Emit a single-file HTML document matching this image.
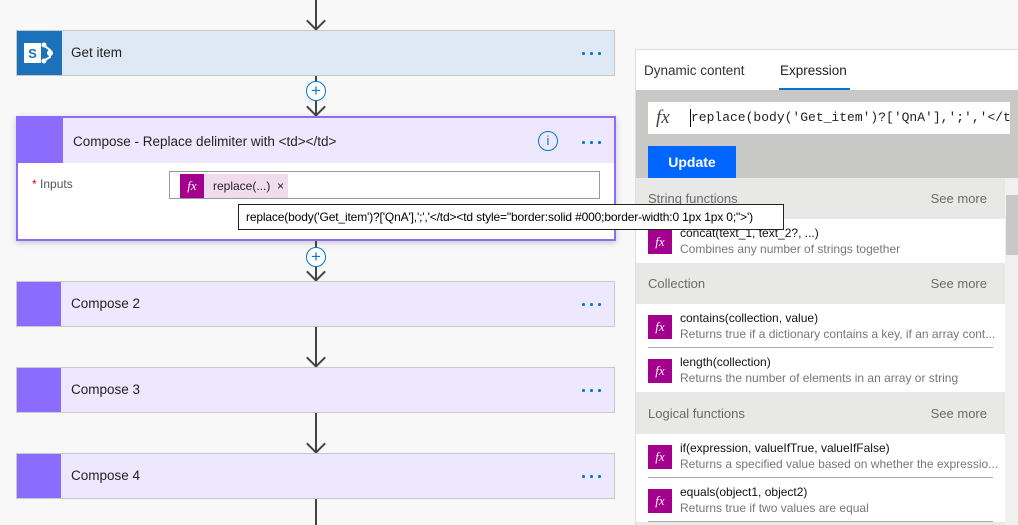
<!DOCTYPE html>
<html><head><meta charset="utf-8"><style>
*{box-sizing:border-box;margin:0;padding:0}
body{width:1018px;height:525px;overflow:hidden;background:#f8f8f8;font-family:"Liberation Sans",sans-serif;position:relative;color:#000}
.abs{position:absolute}
.card{position:absolute;left:16px;width:599px;border:1px solid #c8c8c8;background:#ede8fe}
.card .ic{position:absolute;left:0;top:0;width:44px;height:100%;background:#8c6cff}
.card .t{position:absolute;left:54px;top:0;line-height:44px;font-size:13.5px;color:#222}
.dots{position:absolute;right:13px;top:21px;width:19px;height:3px}
.dots i{position:absolute;top:0;width:2.5px;height:2.5px;border-radius:50%;background:#0078d4}
.line{position:absolute;left:315px;width:2px;background:#444}
.arr{position:absolute;left:309px;width:14px;height:14px;border-right:2px solid #444;border-bottom:2px solid #444;transform:rotate(45deg)}
.plus{position:absolute;left:306px;width:20px;height:20px;border:1px solid #0078d4;border-radius:50%;background:#fff;color:#0078d4;font-size:17px;line-height:17px;text-align:center}
.fx{position:absolute;width:24px;height:24px;background:#a4008e;color:#fff;font-family:"Liberation Serif",serif;font-style:italic;font-size:13px;text-align:center;line-height:23px}
.hd{position:absolute;left:636px;width:369px;height:41px;background:#e8e9e7;font-size:13px;color:#6a6a6a;line-height:42px;padding-left:12px}
.hd span{position:absolute;right:18px}
.it{position:absolute;left:636px;width:369px;height:44px;background:#fff}
.it .fx{left:12px;top:11px}
.it b{position:absolute;left:44px;top:7px;font-weight:normal;font-size:12px;color:#111}
.it em{position:absolute;left:44px;top:23px;font-style:normal;font-size:12px;color:#777;white-space:nowrap}
.it.sep:after{content:"";position:absolute;left:12px;right:12px;bottom:0;height:1px;background:#aaa}
</style></head><body>

<div class="line" style="top:0;height:28px"></div><div class="arr" style="top:14px"></div>

<div class="card" style="top:30px;height:46px;background:#dfe9f5">
 <div class="ic" style="background:#1b72bb;width:45px">
  <svg width="45" height="44" viewBox="0 0 45 44"><rect x="7" y="12" width="17" height="20" fill="#fff"/><text x="15.5" y="27" font-size="13" font-weight="bold" fill="#1b72bb" text-anchor="middle" font-family="Liberation Sans">S</text><path d="M25 13 L33 19 L33 26 L25 31" fill="none" stroke="#fff" stroke-width="2"/><circle cx="33" cy="22" r="3" fill="#fff"/><circle cx="27" cy="14" r="2.5" fill="#fff"/><circle cx="27" cy="30" r="2.5" fill="#fff"/></svg>
 </div>
 <div class="t">Get item</div>
 <div class="dots"><i style="left:0"></i><i style="left:8px"></i><i style="left:16px"></i></div>
</div>

<div class="line" style="top:76px;height:40px"></div>
<div class="plus" style="top:81px">+</div>
<div class="arr" style="top:100px"></div>

<div class="abs" style="left:16px;top:116px;width:600px;height:125px;border:2px solid #8c6cff;background:#fff;box-shadow:0 2px 6px rgba(0,0,0,.2)">
 <div class="abs" style="left:0;top:0;width:596px;height:45px;background:#ede8fe"></div>
 <div class="abs" style="left:0;top:0;width:45px;height:45px;background:#8c6cff"></div>
 <div class="abs" style="left:55px;top:0;line-height:47px;font-size:13.5px;color:#222">Compose - Replace delimiter with &lt;td&gt;&lt;/td&gt;</div>
 <div class="abs" style="left:520px;top:13px;width:20px;height:20px;border:1.5px solid #0078d4;border-radius:50%;color:#0078d4;font-size:13px;text-align:center;line-height:18px">i</div>
 <div class="dots" style="right:13px;top:23px"><i style="left:0"></i><i style="left:8px"></i><i style="left:16px"></i></div>
 <div class="abs" style="left:14px;top:59px;font-size:12px;color:#555"><span style="color:#d00">*</span> Inputs</div>
 <div class="abs" style="left:151px;top:53px;width:431px;height:28px;border:1px solid #999;background:#fff">
  <div class="fx" style="left:10px;top:2px;height:24px">fx</div>
  <div class="abs" style="left:34px;top:2px;width:84px;height:24px;background:#f1dcef;font-size:12px;line-height:24px;padding-left:9px;color:#222">replace(...) &nbsp;×</div>
 </div>
</div>

<div class="line" style="top:241px;height:40px"></div>
<div class="plus" style="top:247px">+</div>
<div class="arr" style="top:265px"></div>

<div class="card" style="top:281px;height:46px"><div class="ic"></div><div class="t">Compose 2</div><div class="dots"><i style="left:0"></i><i style="left:8px"></i><i style="left:16px"></i></div></div>
<div class="line" style="top:327px;height:40px"></div><div class="arr" style="top:351px"></div>
<div class="card" style="top:367px;height:46px"><div class="ic"></div><div class="t">Compose 3</div><div class="dots"><i style="left:0"></i><i style="left:8px"></i><i style="left:16px"></i></div></div>
<div class="line" style="top:413px;height:40px"></div><div class="arr" style="top:437px"></div>
<div class="card" style="top:453px;height:46px"><div class="ic"></div><div class="t">Compose 4</div><div class="dots"><i style="left:0"></i><i style="left:8px"></i><i style="left:16px"></i></div></div>
<div class="line" style="top:499px;height:26px"></div>

<!-- right panel -->
<div class="abs" style="left:635px;top:49px;width:383px;height:476px;background:#fff;border-left:1px solid #ddd;border-top:1px solid #ddd"></div>
<div class="abs" style="left:644px;top:63px;font-size:13.5px;color:#333">Dynamic content</div>
<div class="abs" style="left:780px;top:63px;font-size:13.5px;color:#222">Expression</div>
<div class="abs" style="left:779px;top:88px;width:71px;height:2px;background:#0078d4"></div>
<div class="abs" style="left:636px;top:90px;width:382px;height:88px;background:#c8c9c7"></div>
<div class="abs" style="left:648px;top:102px;width:362px;height:32px;background:#fff">
 <div class="abs" style="left:8px;top:5px;font-family:'Liberation Serif',serif;font-style:italic;font-size:19px;color:#444">fx</div>
 <div class="abs" style="left:42px;top:7px;width:1px;height:18px;background:#000"></div>
 <div class="abs" style="left:43px;top:8px;font-family:'Liberation Mono',monospace;font-size:13px;white-space:nowrap;overflow:hidden;width:319px;color:#222">replace(body('Get_item')?['QnA'],';','&lt;/td</div>
</div>
<div class="abs" style="left:648px;top:146px;width:88px;height:32px;background:#0066ff;color:#fff;font-weight:bold;font-size:14px;text-align:center;line-height:32px">Update</div>
<div class="abs" style="left:636px;top:178px;width:382px;height:347px;background:#e8e9e7"></div>
<div class="abs" style="left:1005px;top:178px;width:13px;height:347px;background:#f0f0f0"></div>
<div class="abs" style="left:1006px;top:195px;width:12px;height:60px;background:#c8c8c8"></div>

<div class="hd" style="top:178px">String functions<span>See more</span></div>
<div class="it" style="top:219px"><div class="fx">fx</div><b>concat(text_1, text_2?, ...)</b><em>Combines any number of strings together</em></div>
<div class="hd" style="top:263px">Collection<span>See more</span></div>
<div class="it sep" style="top:304px"><div class="fx">fx</div><b>contains(collection, value)</b><em>Returns true if a dictionary contains a key, if an array cont...</em></div>
<div class="it" style="top:348px"><div class="fx">fx</div><b>length(collection)</b><em>Returns the number of elements in an array or string</em></div>
<div class="hd" style="top:393px">Logical functions<span>See more</span></div>
<div class="it sep" style="top:434px"><div class="fx">fx</div><b>if(expression, valueIfTrue, valueIfFalse)</b><em>Returns a specified value based on whether the expressio...</em></div>
<div class="it sep" style="top:478px"><div class="fx">fx</div><b>equals(object1, object2)</b><em>Returns true if two values are equal</em></div>

<div class="abs" style="left:238px;top:204px;width:546px;height:26px;border:1px solid #222;background:#fff;line-height:24px;padding-left:7px;white-space:nowrap;overflow:hidden;z-index:20;font-size:12px;letter-spacing:-0.15px">replace(body('Get_item')?['QnA'],';','&lt;/td&gt;&lt;td style="border:solid #000;border-width:0 1px 1px 0;"&gt;')</div>
</body></html>
